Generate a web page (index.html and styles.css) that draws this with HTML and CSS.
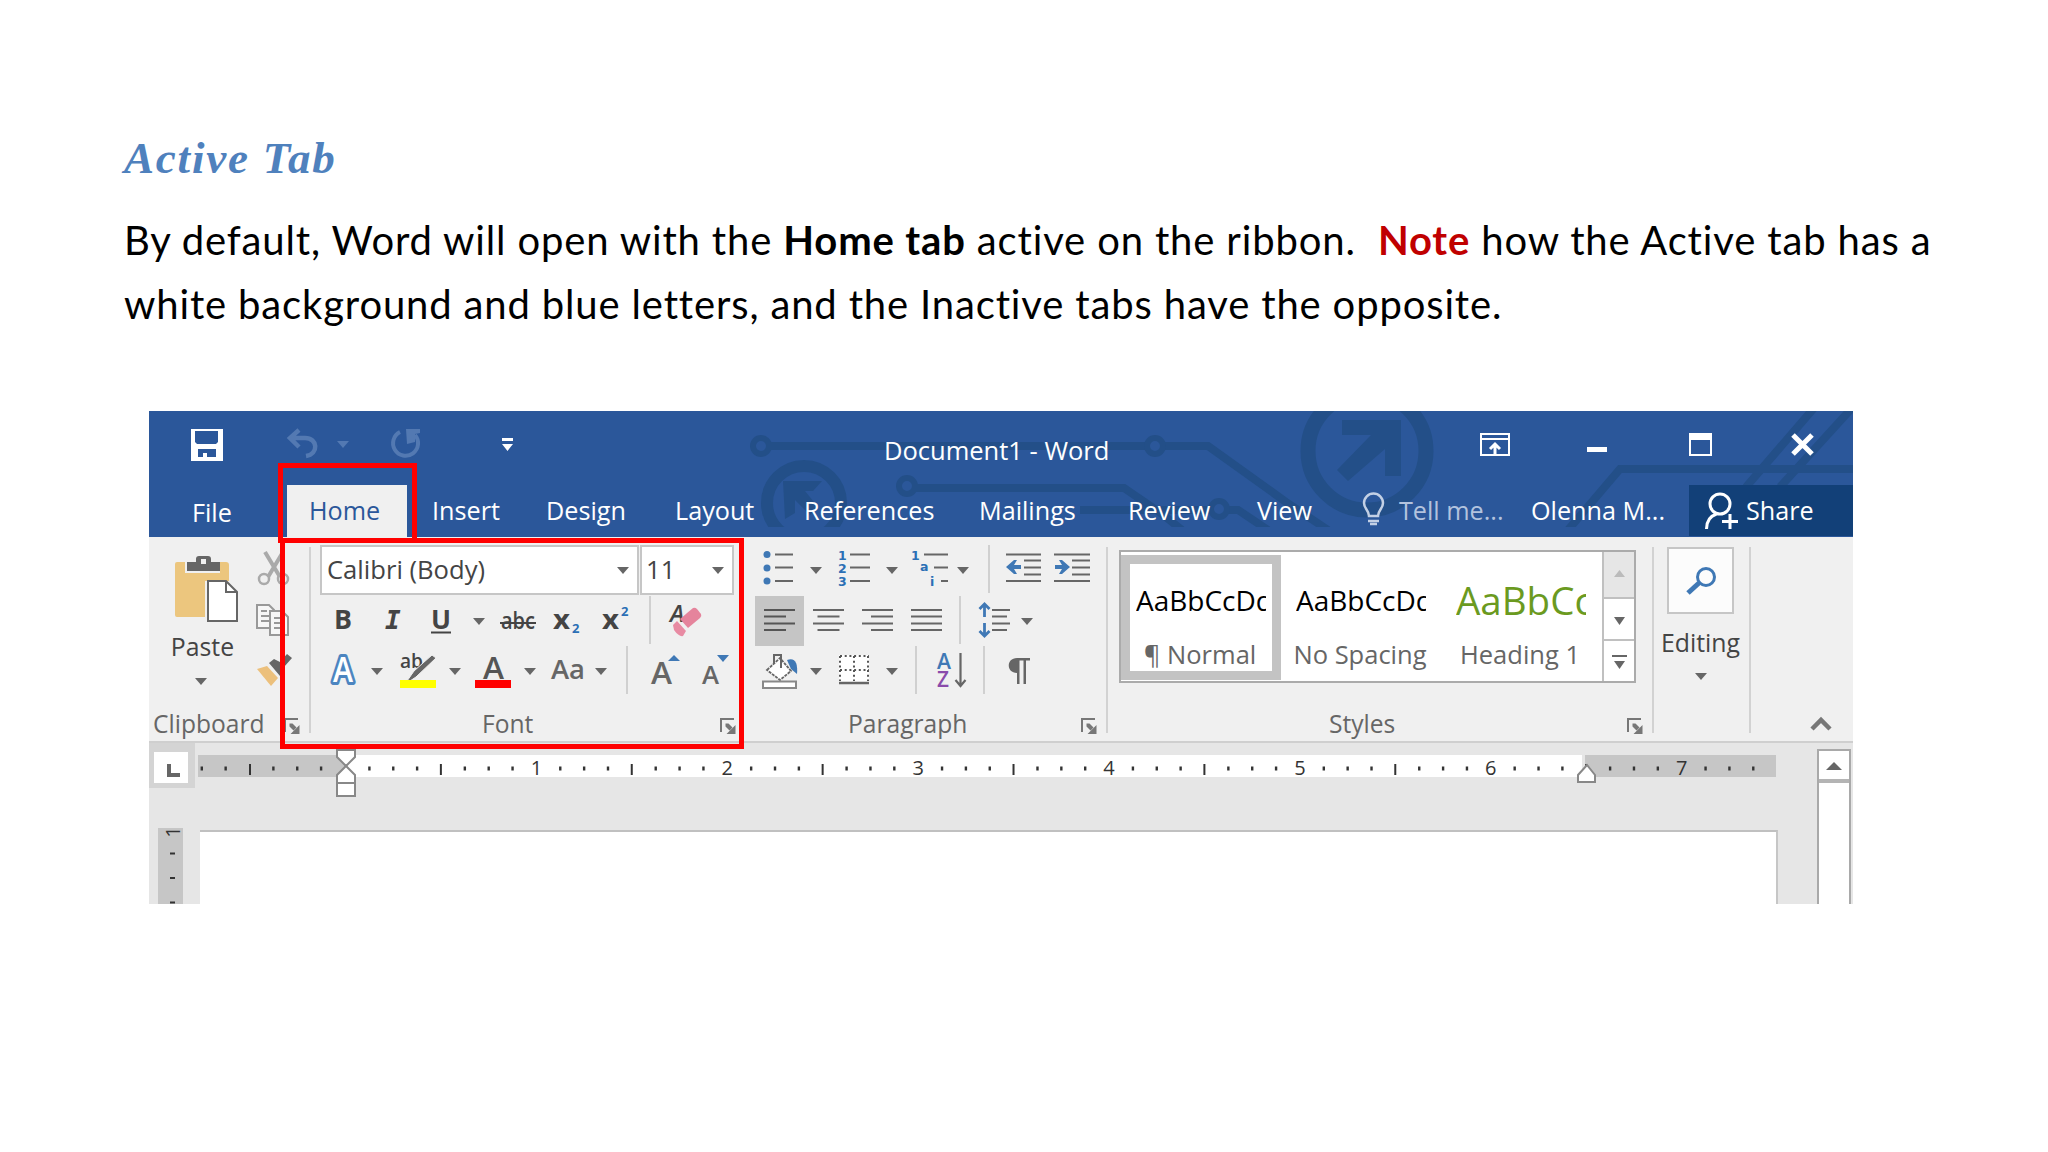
FILE: index.html
```html
<!DOCTYPE html>
<html lang="en">
<head>
<meta charset="utf-8">
<title>Active Tab</title>
<link rel="stylesheet" href="styles.css">
</head>
<body>
<svg class="defs" width="0" height="0" aria-hidden="true">
  <symbol id="caret" viewBox="0 0 12 50"><path d="M0 22h12l-6 7z"/></symbol>
  <symbol id="launch" viewBox="0 0 16 16"><path d="M1 14V1h13" fill="none" stroke="#777" stroke-width="2"/><path d="M15.500 7v9h-9zM5.500 5.500h3l4 4-3 3-4-4z" fill="#777"/></symbol>
</svg>
<main class="page">
  <h1 class="heading">Active Tab</h1>
  <p class="para"><span class="line l1">By default, Word will open with the <b>Home tab</b> active on the ribbon.&nbsp; <b class="note">Note</b> how the Active tab has a</span><span class="line l2">white background and blue letters, and the Inactive tabs have the opposite.</span></p>

  <section class="window">
    <header class="top">
      <svg class="circuit" viewBox="149 411 1704 116" width="1704" height="116" fill="none" stroke="#234f88" stroke-width="8">
        <circle cx="761" cy="446" r="8" stroke-width="6"/><path d="M770 446h376M1164 446h44l78 56 42 28"/>
        <circle cx="1155" cy="446" r="8" stroke-width="6"/>
        <circle cx="907" cy="486" r="8" stroke-width="6"/><path d="M916 488h208l38 26 20 16M1080 510h130M1228 510h10l30 20"/>
        <circle cx="1219" cy="509" r="8" stroke-width="6"/>
        <circle cx="804" cy="503" r="37" stroke-width="12"/>
        <path d="M783 481h39l-9 10h-8l13 16-8 8-15-15v13l-10 6z" fill="#234f88" stroke="none"/>
        <circle cx="1367" cy="451" r="59" stroke-width="15"/>
        <path d="M1342 420h59v56h-16v-27l-37 32-11-11 34-35h-29z" fill="#234f88" stroke="none"/>
        <path d="M1568 530l52-61h233M1814 408l-68 79M1852 408l-72 79"/>
      </svg>
      <div class="titlebar">
        <svg width="32" height="74"><path d="M0 18h32v32H0z" fill="#fff"/><path d="M4 20h23v11l-2 2H6l-2-2zM7 38h18v8H16v-4h-4v4H7z" fill="#2b579a"/></svg>
        <svg width="32" height="74" fill="none" stroke="#5379b2" stroke-width="4.500"><path d="M3 27h15c13 0 14 16 1 18M12 19l-9 8 9 9"/></svg>
        <svg width="12" height="74"><path d="M0 30h12l-6 7z" fill="#5379b2"/></svg>
        <svg width="30" height="74" fill="none" stroke="#5379b2" stroke-width="4"><path d="M9 21A12.500 12.500 0 1 0 24 24"/><path d="M15 18h14v4l-5 1v8l-8 2z" fill="#5379b2" stroke="none"/></svg>
        <svg width="12" height="74" fill="#fff"><path d="M0 27h11v3H0zM0 33h11l-5.500 7z"/></svg>
        <span class="doc">Document1 - Word</span>
        <svg width="30" height="74" fill="none" stroke="#fff" stroke-width="2"><path d="M1 23h28v21H1zM1 28h28"/><path d="M15 44V33M10 38l5-5 5 5" stroke-width="3"/></svg>
        <svg width="20" height="74"><path d="M0 36h20v5H0z" fill="#fff"/></svg>
        <svg width="23" height="74"><path d="M1 23h21v21H1z" fill="none" stroke="#fff" stroke-width="2"/><path d="M1 22h21v7H1z" fill="#fff"/></svg>
        <svg width="23" height="74"><path d="M2 24l19 19M21 24L2 43" stroke="#fff" stroke-width="5"/></svg>
      </div>
      <nav class="tabs">
        <span class="file">File</span><span class="home">Home</span><span>Insert</span><span>Design</span><span>Layout</span><span>References</span><span>Mailings</span><span>Review</span><span>View</span>
        <svg width="24" height="52" fill="none" stroke="#c3d0e5" stroke-width="2.500"><path d="M7 31c0-6-5-7-5-13a9.500 9.500 0 0 1 19 0c0 6-5 7-5 13z"/><path d="M6 36h11M8 39h7"/></svg>
        <span class="tell">Tell me...</span><span>Olenna M...</span>
        <span class="share"><svg width="34" height="52" fill="none" stroke="#fff" stroke-width="3"><circle cx="15" cy="19" r="10"/><path d="M1.500 44c0-8 4-13 10-15M25 29v15M17 36.500h16"/></svg>Share</span>
      </nav>
    </header>

    <div class="ribbon">
      <section class="group clip">
        <div class="cliprow">
          <div class="paste">
            <svg width="107" height="80"><path d="M28 17h49q3 0 3 3v16H56v36H28q-2 0-2-2V19q0-2 2-2z" fill="#ecc67e"/><path d="M36 16h10v-5h15v5h10v12H36z" fill="#f0f0f0"/><path d="M38 17h9v-3q0-3 3-3h9q3 0 3 3v3h9v9H38z" fill="#666"/><path d="M52 14h5v5h-5z" fill="#f0f0f0"/><path d="M59 36h18l11 11v29H59z" fill="#fff" stroke="#666" stroke-width="2"/><path d="M77 36v11h11" fill="none" stroke="#666" stroke-width="2"/></svg>
            <span>Paste</span>
            <svg class="c" width="12" height="50"><use href="#caret"/></svg>
          </div>
          <div class="clipicons">
            <svg width="38" height="51" fill="none" stroke="#aaa"><path d="M9 7l15 25M27 7L12 32" stroke-width="4"/><circle cx="8" cy="34" r="5" stroke-width="2.500"/><circle cx="27" cy="34" r="5" stroke-width="2.500"/></svg>
            <svg width="38" height="50" stroke="#999" stroke-width="2"><path d="M1 9h12l5 5v18H1z" fill="#f7f7f7"/><path d="M5 15h6M5 20h9M5 25h9"/><path d="M14 15h12l6 6v18H14z" fill="#f7f7f7"/><path d="M18 22h6M18 27h10M18 32h10"/></svg>
            <svg width="38" height="50"><path d="M1 23l10-3 11 12-7 8z" fill="#ecc07c"/><path d="M13 17l5-4 6 3 7-8 5 4-8 9 1 5-5 4z" fill="#666"/></svg>
          </div>
        </div>
        <footer><span>Clipboard</span><svg width="16" height="16"><use href="#launch"/></svg></footer>
      </section>
      <i class="sep"></i>
      <section class="group font">
        <div class="boxes">
          <div class="box name"><span>Calibri (Body)</span><svg class="c" width="12" height="50"><use href="#caret"/></svg></div>
          <div class="box size"><span>11</span><svg class="c" width="12" height="50"><use href="#caret"/></svg></div>
        </div>
        <div class="row f2">
          <svg width="30" height="50"><text x="1" y="33" class="g b" textLength="18" lengthAdjust="spacingAndGlyphs">B</text></svg>
          <svg width="30" height="50"><text x="4" y="33" class="g serif">I</text></svg>
          <svg width="30" height="50"><text x="2" y="33" class="g b" textLength="20" lengthAdjust="spacingAndGlyphs">U</text><path d="M2 36.500h20" stroke="#444" stroke-width="2"/></svg>
          <svg class="c" width="12" height="50"><use href="#caret"/></svg>
          <svg width="37" height="50"><text x="1" y="33" class="g b sm" textLength="34" lengthAdjust="spacingAndGlyphs">abc</text><path d="M0 27h36" stroke="#444" stroke-width="2"/></svg>
          <svg width="32" height="50"><text x="1" y="33" class="g b" textLength="17" lengthAdjust="spacingAndGlyphs">x</text><text x="20" y="37" class="g tiny">2</text></svg>
          <svg width="32" height="50"><text x="1" y="33" class="g b" textLength="17" lengthAdjust="spacingAndGlyphs">x</text><text x="20" y="20" class="g tiny">2</text></svg>
          <i class="bar"></i>
          <svg width="34" height="50"><text x="1" y="26" class="g it">A</text><path d="M11 23l13-11q2-1 4 1l4 5q1 2-1 4L19 32z" fill="#e5849c"/><path d="M4 29l4-4 9 10-3 5q-4 1-9-6z" fill="#e88ba3"/></svg>
        </div>
        <div class="row f3">
          <svg width="32" height="50"><text x="4" y="36" class="g fx" textLength="20" lengthAdjust="spacingAndGlyphs">A</text></svg>
          <svg class="c" width="12" height="50"><use href="#caret"/></svg>
          <svg width="38" height="50"><text x="1" y="22" class="g sm2" textLength="23" lengthAdjust="spacingAndGlyphs">ab</text><path d="M33 9l4 3-20 19-6 4H8l7-10z" fill="#666" stroke="#f0f0f0"/><path d="M1 34h36v8H1z" fill="#ff0"/></svg>
          <svg class="c" width="12" height="50"><use href="#caret"/></svg>
          <svg width="37" height="50"><text x="8" y="33" class="g med" textLength="21" lengthAdjust="spacingAndGlyphs">A</text><path d="M0 34h36v8H0z" fill="red"/></svg>
          <svg class="c" width="12" height="50"><use href="#caret"/></svg>
          <svg width="36" height="50"><text x="0" y="33" class="g aa" textLength="34" lengthAdjust="spacingAndGlyphs">Aa</text></svg>
          <svg class="c" width="12" height="50"><use href="#caret"/></svg>
          <i class="bar"></i>
          <svg width="32" height="50"><text x="1" y="38" class="g grow" textLength="21" lengthAdjust="spacingAndGlyphs">A</text><path d="M18 15l6-6 6 6z" fill="#3f78b5"/></svg>
          <svg width="30" height="50"><text x="1" y="38" class="g shrink" textLength="17" lengthAdjust="spacingAndGlyphs">A</text><path d="M16 9h12l-6 7z" fill="#3f78b5"/></svg>
        </div>
        <footer><span>Font</span><svg width="16" height="16"><use href="#launch"/></svg></footer>
      </section>
      <section class="group pg">
        <div class="row first p1">
          <svg width="34" height="50"><path d="M13 9.500h18M13 22.500h18M13 36h18" stroke="#666" stroke-width="2"/><g fill="#3f78b5"><circle cx="5" cy="9.500" r="3.500"/><circle cx="5" cy="23" r="3.500"/><circle cx="5" cy="36" r="3.500"/></g></svg>
          <svg class="c" width="12" height="50"><use href="#caret"/></svg>
          <svg width="34" height="50"><path d="M12 9.500h20M12 22.500h20M12 36h20" stroke="#666" stroke-width="2"/><g class="num"><text x="0" y="15">1</text><text x="0" y="28">2</text><text x="0" y="41">3</text></g></svg>
          <svg class="c" width="12" height="50"><use href="#caret"/></svg>
          <svg width="38" height="50"><path d="M13 9.500h24M23 22.500h14M30 36h7" stroke="#666" stroke-width="2"/><g class="num"><text x="0" y="15">1</text><text x="9" y="26">a</text><text x="19" y="41">i</text></g></svg>
          <svg class="c" width="12" height="50"><use href="#caret"/></svg>
          <i class="bar"></i>
          <svg width="38" height="50"><path d="M1 9.500h35M19 15.500h17M19 22.500h17M19 29.500h17M1 36h35" stroke="#666" stroke-width="2"/><path d="M1 22l8-7h3l-3 5h7v4H9l3 5H9z" fill="#3f78b5"/></svg>
          <svg width="38" height="50"><path d="M1 9.500h36M19 15.500h18M19 22.500h18M19 29.500h18M1 36h36" stroke="#666" stroke-width="2"/><path d="M17 22l-8-7H6l3 5H2v4h7l-3 5h3z" fill="#3f78b5"/></svg>
        </div>
        <div class="row p2">
          <svg class="on" width="49" height="50"><path d="M9 14h31M9 20.500h22M9 27.500h31M9 34h22" stroke="#555" stroke-width="2"/></svg>
          <svg width="49" height="50"><path d="M9 14h31M13.500 20.500h22M9 27.500h31M13.500 34h22" stroke="#666" stroke-width="2"/></svg>
          <svg width="49" height="50"><path d="M9 14h31M18 20.500h22M9 27.500h31M18 34h22" stroke="#666" stroke-width="2"/></svg>
          <svg width="49" height="50"><path d="M9 14h31M9 20.500h31M9 27.500h31M9 34h31" stroke="#666" stroke-width="2"/></svg>
          <i class="bar"></i>
          <svg width="34" height="50"><path d="M15 14h18M15 20.500h15M15 27.500h18M15 34h15" stroke="#666" stroke-width="2"/><path d="M7.500 21V8M2.500 13l5-5 5 5M7.500 27v13M2.500 35l5 5 5-5" fill="none" stroke="#3f78b5" stroke-width="2.800"/></svg>
          <svg class="c" width="12" height="50"><use href="#caret"/></svg>
        </div>
        <div class="row p3">
          <svg width="38" height="50"><path d="M26 14c8-3 11 3 10 14l-6-5z" fill="#3f78b5"/><path d="M6 24l13-12 11 13-11 9z" fill="#fff" stroke="#666" stroke-width="1.800" stroke-dasharray="3 1"/><path d="M13 18V9h7v13" fill="none" stroke="#666" stroke-width="2"/><path d="M2 35.500h33v6.500H2z" fill="#fff" stroke="#888" stroke-width="2"/></svg>
          <svg class="c" width="12" height="50"><use href="#caret"/></svg>
          <svg width="34" height="50"><path d="M1 9h30v29H1z" fill="#fff"/><path d="M2 10h29M2 24h29M2 10v25M16 10v25M30 10v25" stroke="#555" stroke-width="2" stroke-dasharray="2 2.700"/><path d="M1 37h30" stroke="#666" stroke-width="2.500"/></svg>
          <svg class="c" width="12" height="50"><use href="#caret"/></svg>
          <i class="bar"></i>
          <svg width="34" height="50"><text x="2" y="23" class="az" textLength="14" lengthAdjust="spacingAndGlyphs">A</text><text x="2" y="41" class="az z" textLength="12" lengthAdjust="spacingAndGlyphs">Z</text><path d="M25.500 7v32M20.500 34l5 6 5-6" fill="none" stroke="#666" stroke-width="2.200"/></svg>
          <i class="bar"></i>
          <svg width="30" height="50"><path d="M23 12H10C-1 12-1 27 10 27V38h2.500V14.500h4V38H19V14.500h4z" fill="#666"/></svg>
        </div>
        <footer><span>Paragraph</span><svg width="16" height="16"><use href="#launch"/></svg></footer>
      </section>
      <i class="sep"></i>
      <section class="group st">
        <div class="gallery">
          <div class="style cur"><b>AaBbCcDd</b><span>¶ Normal</span></div>
          <div class="style"><b>AaBbCcDd</b><span>No Spacing</span></div>
          <div class="style h"><b>AaBbCc</b><span>Heading 1</span></div>
          <div class="spin"><svg class="off" width="30" height="45"><path d="M10 25l5.500-7 5.500 7z" fill="#bbb"/></svg><svg width="30" height="40"><path d="M10 18h11l-5.500 8z" fill="#666"/></svg><svg width="30" height="40"><path d="M8 14h15v2H8zM10 20h11l-5.500 8z" fill="#666"/></svg></div>
        </div>
        <footer><span>Styles</span><svg width="16" height="16"><use href="#launch"/></svg></footer>
      </section>
      <i class="sep"></i>
      <section class="group ed">
        <div class="find"><svg width="63" height="63" fill="none" stroke="#3f78b5"><circle cx="37" cy="28" r="8.500" stroke-width="3"/><path d="M30 34L19 44" stroke-width="5"/></svg></div>
        <span>Editing</span>
        <svg class="c" width="12" height="50"><use href="#caret"/></svg>
      </section>
      <i class="sep"></i>
      <svg class="collapse" width="22" height="16"><path d="M2 14l9-9 9 9" fill="none" stroke="#777" stroke-width="4.500"/></svg>
    </div>

    <div class="work">
      <div class="left">
        <div class="corner"><svg width="34" height="31"><path d="M15 12v11h11" fill="none" stroke="#666" stroke-width="4"/></svg></div>
        <svg class="vruler" width="25" height="76"><text transform="translate(22 4) rotate(-90)" class="rn">1</text><path d="M12 25.500h5M12 50h5M12 74.500h5" stroke="#333" stroke-width="2"/></svg>
      </div>
      <div class="mid">
        <svg class="hruler" viewBox="198 743 1600 60" width="1600" height="60">
          <path d="M198 755h147v22H198zM1585 755h191v22h-191z" fill="#c6c6c6"/><path d="M345 755h1237v22H345z" fill="#fff"/>
          <path d="M200.600 768.500H345" class="t" stroke-dasharray="2.400 21.460 2.400 45.320 2.400 21.460 2.400 21.460 2.400 90"/>
          <path d="M368.200 768.500H1768" class="t" stroke-dasharray="2.400 21.460 2.400 21.460 2.400 45.320"/>
          <path d="M249 769.500H1620" class="tall" stroke-dasharray="2 188.880"/>
          <g class="rn"><text x="536.400" y="775">1</text><text x="727.300" y="775">2</text><text x="918.200" y="775">3</text><text x="1109" y="775">4</text><text x="1299.900" y="775">5</text><text x="1490.800" y="775">6</text><text x="1681.700" y="775">7</text></g>
          <g fill="#fff" stroke="#888" stroke-width="2"><path d="M337 750h18v7l-9 9-9-9z"/><path d="M337 783v-8l9-9 9 9v8zM337 783h18v13h-18z"/><path d="M1578 782v-7l9-10 8 10v7z"/></g>
        </svg>
        <div class="sheet"></div>
      </div>
      <div class="scroll"><svg width="31" height="29"><path d="M7 19l8-8 8 8z" fill="#666"/></svg></div>
    </div>
    <div class="mark tabmark"></div>
    <div class="mark groupmark"></div>
  </section>
</main>
</body>
</html>
```
FILE: styles.css
```css
* { box-sizing: border-box; }
body { margin: 0; background: #fff; font-family: "Open Sans", "Noto Sans", sans-serif; overflow: hidden; }
svg { display: block; flex: none; overflow: visible; }
.defs { position: absolute; }
.page { width: 2048px; height: 1152px; padding: 130px 0 0 124px; }
.heading { margin: 0; height: 80px; font: italic bold 45px/56px "Liberation Serif", serif; color: #4f81bd; letter-spacing: 1.8px; }
.para { margin: 0; height: 201px; font-family: Lato, sans-serif; font-size: 40px; color: #000; }
.line { display: block; height: 63.500px; line-height: 60px; white-space: nowrap; letter-spacing: .85px; }
.note { color: #c00000; }

.window { position: relative; width: 1704px; height: 493px; margin-left: 25px; background: #e6e6e6; }
.top { position: relative; height: 126px; background: #2b579a; color: #fff; }
.circuit { position: absolute; left: 0; top: 0; overflow: hidden; }
.titlebar, .tabs { position: relative; display: grid; align-items: start; white-space: nowrap; }
.titlebar { height: 74px; padding-left: 42px; grid-template-columns: 96px 50px 54px 111px 382px 596px 107px 102px 102px 40px; }
.doc { font-size: 25.500px; line-height: 74px; padding-top: 2px; }
.tabs { height: 52px; padding-left: 43px; font-size: 25.200px; line-height: 50px; grid-template-columns: 95px 145px 114px 129px 129px 175px 149px 129px 105px 37px 132px 158px 164px; }
.file { padding-top: 2px; }
.home { width: 120px; height: 53px; padding-left: 22px; background: #f0f0f0; color: #2b579a; }
.tell { color: #b3c3de; }
.share { display: flex; height: 51px; gap: 7px; padding-left: 16px; background: #124078; }

.ribbon { display: flex; height: 206px; background: #f0f0f0; border-bottom: 2px solid #cfcfcf; color: #444; }
.group { display: flex; flex-direction: column; padding-top: 8px; height: 204px; }
.sep { width: 2px; height: 186px; margin-top: 10px; background: #d2d2d2; }
.clip { width: 160px; } .font { width: 434px; } .pg { width: 361px; } .st { width: 544px; } .ed { width: 95px; }
.group footer { display: flex; justify-content: space-between; align-items: flex-start; margin-top: auto; height: 45px; padding: 11px 9px 0 0; font-size: 24.600px; line-height: 34px; color: #666; }
.group footer svg { margin-top: 11px; }
.clip footer { padding-left: 4px; } .font footer { padding-left: 171px; } .pg footer { padding-left: 103px; } .st footer { padding-left: 221px; }
.c { fill: #666; }
.cliprow { display: flex; height: 151px; }
.paste { width: 107px; display: flex; flex-direction: column; align-items: center; font-size: 24.800px; line-height: 34px; }
.paste span { padding-top: 4px; height: 28px; }
.paste .c { margin: 3px 3px 0 0; }
.boxes { display: flex; gap: 1px; padding-left: 9px; height: 51px; }
.box { display: flex; justify-content: space-between; height: 50px; padding: 0 8px 0 5px; border: 2px solid #c6c6c6; background: #fff; font-size: 25.600px; line-height: 46px; }
.box svg { margin-top: -2px; }
.name { width: 319px; } .size { width: 94px; padding-left: 4px; }
.row { display: grid; height: 50px; align-items: start; }
.first { height: 51px; }
.bar { width: 2px; height: 48px; background: #d0d0d0; }
.f2 { padding-left: 22px; grid-template-columns: 48px 48px 44px 27px 52px 49px 48px 20px 34px; }
.f3 { padding-left: 18px; grid-template-columns: 42px 28px 50px 26px 49px 27px 44px 31px 24px 51px 30px; }
.p1 { padding-left: 17px; grid-template-columns: 48px 28px 48px 25px 46px 31px 17px 48px 38px; }
.p2 { padding-left: 10px; grid-template-columns: 49px 49px 49px 57px 18px 44px 12px; }
.p3 { padding-left: 16px; grid-template-columns: 49px 28px 48px 29px 20px 48px 24px 30px; }
.on { background: #c5c5c5; }
.g { fill: #444; font-size: 27px; }
.b { font-weight: bold; font-size: 26px; }
.serif { font: italic bold 26px "DejaVu Sans Mono", monospace; }
.sm { font-size: 23px; font-weight: 600; }
.sm2 { font-size: 20px; font-weight: 600; }
.tiny { fill: #2b6fb5; font-size: 13px; font-weight: bold; }
.it { font-style: italic; font-size: 24px; font-weight: 600; }
.fx { fill: #fff; stroke: #4c85c0; stroke-width: 6px; paint-order: stroke; stroke-linejoin: round; font-size: 35px; font-weight: 600; }
.med { font-size: 30px; font-weight: 600; fill: #555; }
.aa { font-size: 27px; font-weight: 600; fill: #666; }
.grow { font-size: 31px; font-weight: 600; fill: #666; }
.shrink { font-size: 25px; font-weight: 600; fill: #666; }
.num { fill: #2b6fb5; font: bold 12.500px "DejaVu Sans", sans-serif; }
.az { fill: #3f78b5; font-size: 21px; font-weight: 600; }
.z { fill: #8a4bab; }

.gallery { display: flex; width: 517px; height: 133px; margin: 5px 0 0 11px; border: 2px solid #ababab; background: #fff; }
.style { width: 160px; height: 125px; margin-top: 3px; padding: 9px 15px 0; display: flex; flex-direction: column; align-items: center; white-space: nowrap; }
.style b { width: 130px; height: 64px; line-height: 82px; margin-top: -5px; font-weight: 400; font-size: 28px; color: #000; overflow: hidden; }
.style span { line-height: 34px; font-size: 25.500px; margin: 14px 2px 0 0; color: #666; }
.style.cur { border: 9px solid #c3c3c3; padding: 0 6px; }
.h b { font-size: 38.500px; line-height: 83px; color: #6b9a1f; }
.spin { display: flex; flex-direction: column; width: 32px; gap: 2px; margin-left: auto; background: #c0c0c0; border-left: 2px solid #c0c0c0; }
.spin svg { background: #fff; }
.spin .off { background: #e6e6e6; }
.ed { align-items: center; font-size: 24.800px; line-height: 34px; padding: 10px 2px 0 0; }
.find { width: 67px; height: 67px; border: 2px solid #c6c6c6; background: #fcfcfc; }
.ed span { margin-top: 11px; }
.ed .c { margin-top: -8px; }
.collapse { margin: 178px 0 0 59px; }

.work { display: flex; height: 161px; overflow: hidden; }
.left { width: 49px; }
.corner { width: 46px; height: 45px; padding: 9px 0 0 5px; background: #d4d4d4; }
.corner svg { background: #fff; }
.vruler { margin: 40px 0 0 9px; background: #c6c6c6; }
.mid { width: 1619px; height: 161px; }
.sheet { width: 1578px; height: 76px; margin: 27px 0 0 2px; background: #fff; border-top: 2px solid #c0c0c0; border-right: 2px solid #c6c6c6; }
.scroll { width: 34px; margin-top: 6px; border: 2px solid #a9a9a9; border-bottom: 0; background: #fff; }
.scroll svg { height: 32px; width: 30px; border-bottom: 4px solid #b4b4b4; }
.rn { font-size: 20px; fill: #333; text-anchor: middle; }
.t { stroke: #333; stroke-width: 4px; }
.tall { stroke: #333; stroke-width: 11px; }
.mark { position: absolute; border: 5px solid #f00; }
.tabmark { left: 129px; top: 52px; width: 139px; height: 80px; }
.groupmark { left: 131px; top: 127px; width: 464px; height: 211px; }
```
